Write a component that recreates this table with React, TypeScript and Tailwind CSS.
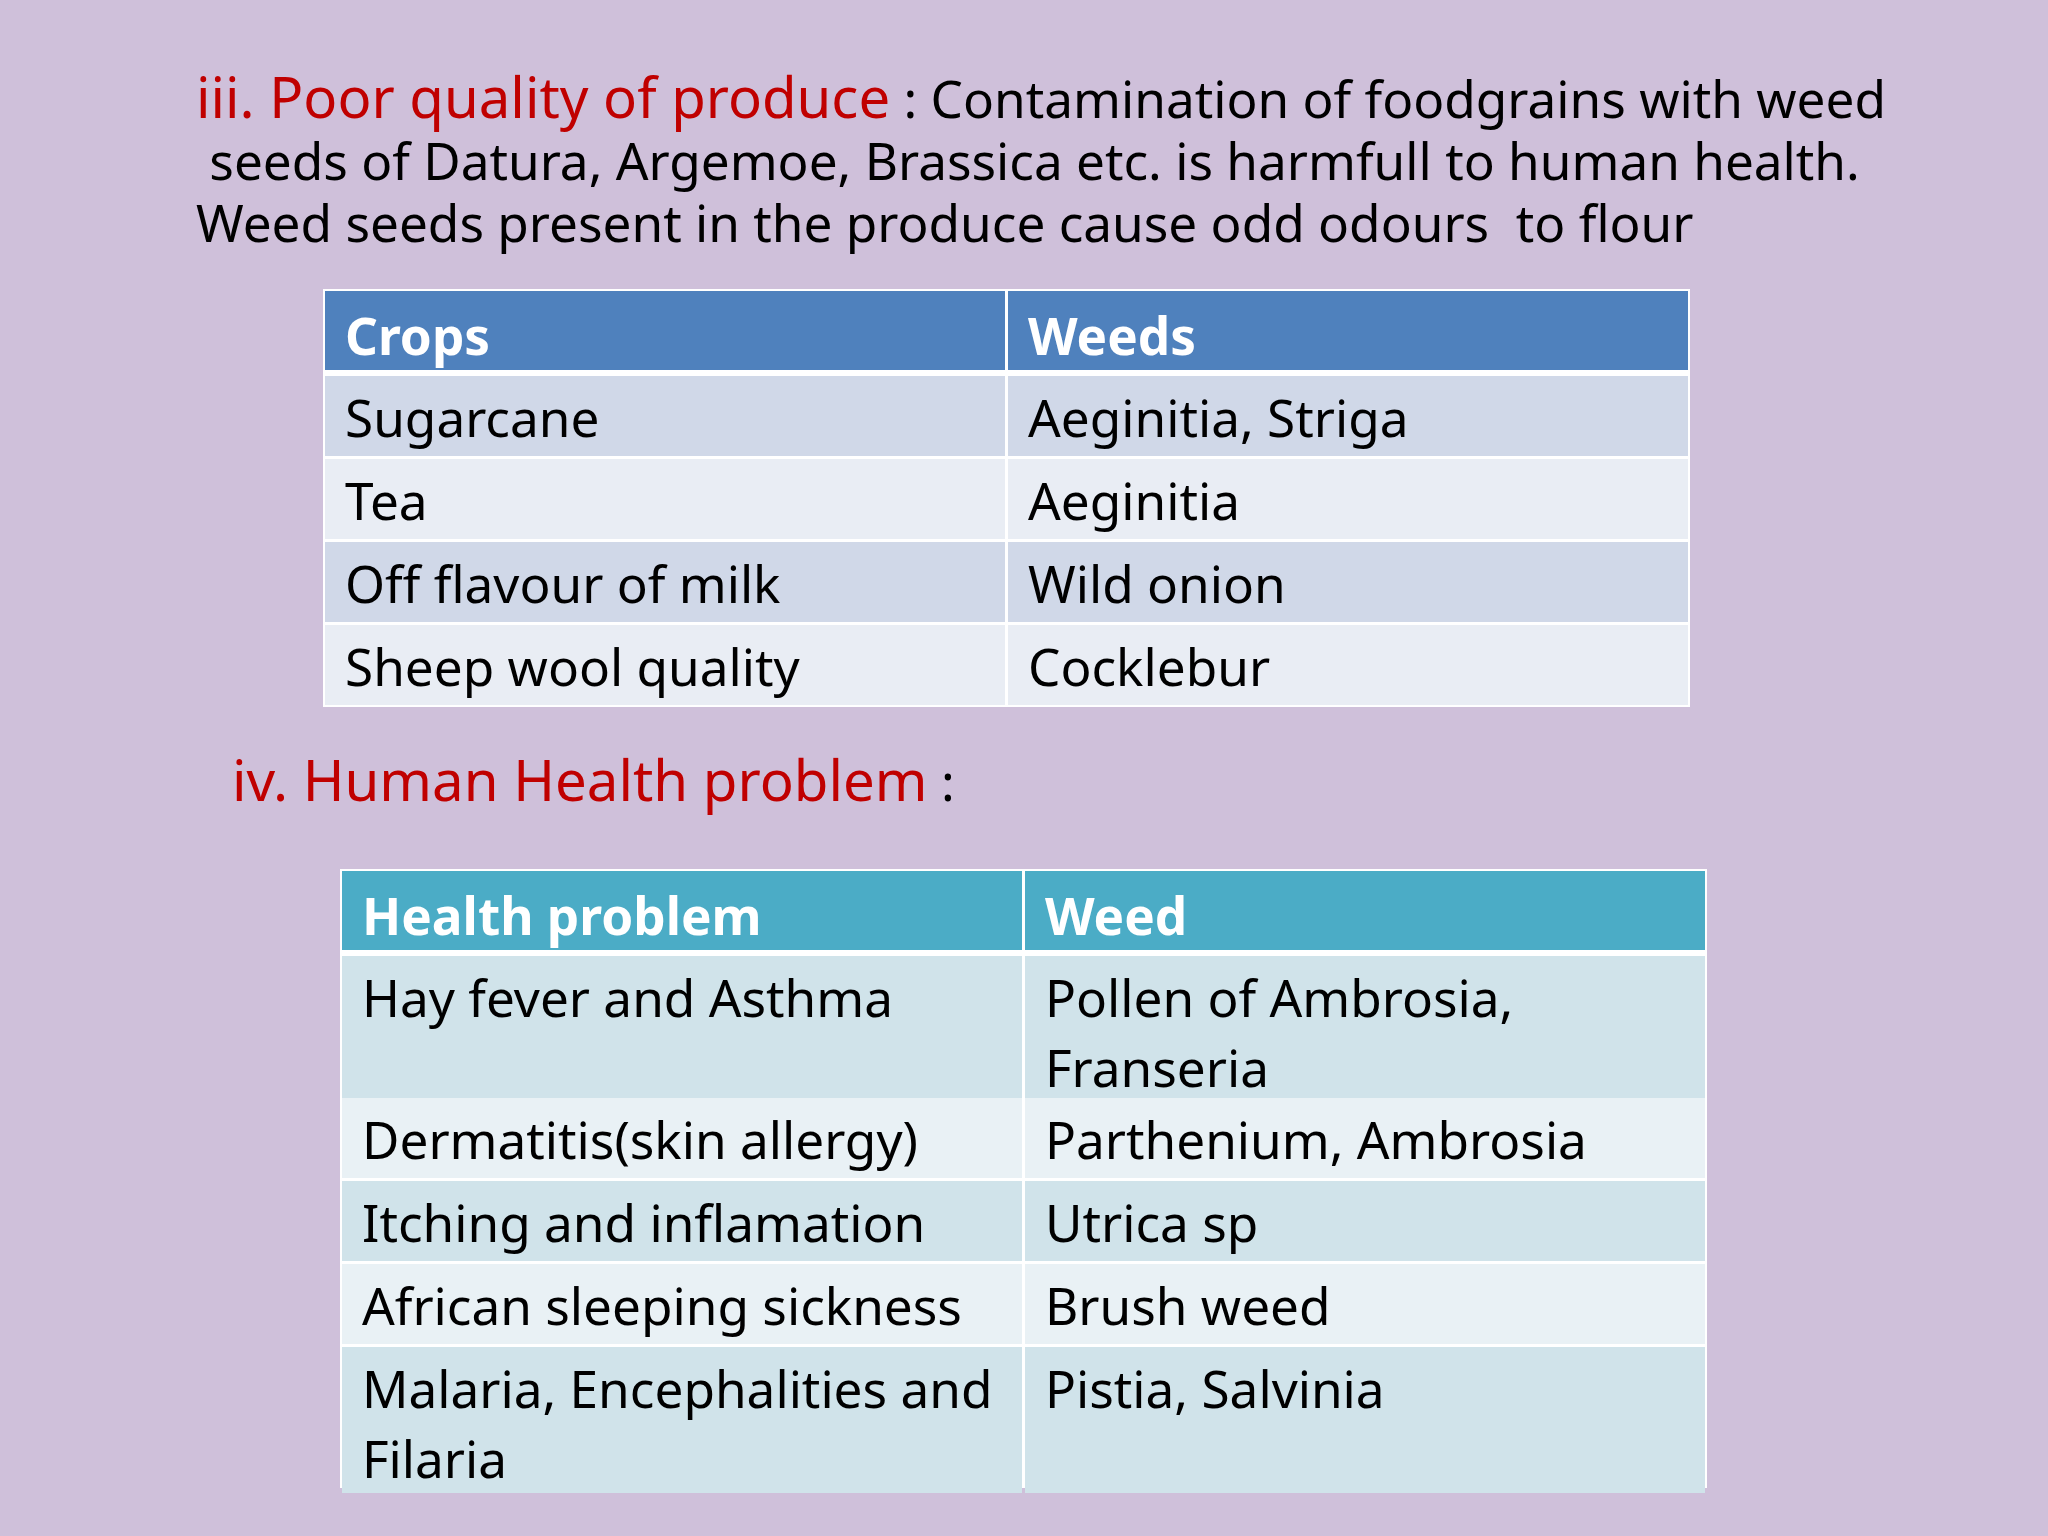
import React from "react";

const font = { fontFamily: '"Noto Sans", "Open Sans", sans-serif' };

type Row = { a: string[]; b: string[]; tall?: boolean };

function Table({
  headA,
  headB,
  rows,
  headBg,
  odd,
  even,
  ml,
}: {
  headA: string;
  headB: string;
  rows: Row[];
  headBg: string;
  odd: string;
  even: string;
  ml: string;
}) {
  return (
    <div className={`${ml} w-[1367px] bg-white p-[2px] flex flex-col`}>
      <div className={`grid grid-cols-2 gap-x-[3px] h-[77px] bg-white`}>
        <div className={`${headBg} pl-[20px] pt-[9px] text-[51.3px] leading-[70px] font-bold text-white`}>{headA}</div>
        <div className={`${headBg} pl-[20px] pt-[9px] text-[51.3px] leading-[70px] font-bold text-white`}>{headB}</div>
      </div>
      <div className="h-[8px]" />
      <div className="flex flex-col gap-y-[3px]">
        {rows.map((r, i) => {
          const bg = i % 2 === 0 ? odd : even;
          return (
            <div key={i} className={`grid grid-cols-2 gap-x-[3px] ${r.tall ? "h-[139px]" : "h-[80px]"}`}>
              <div className={`${bg} pl-[20px] pt-[6px] text-[51.3px] leading-[70px] text-black`}>
                {r.a.map((t, j) => (
                  <div key={j}>{t}</div>
                ))}
              </div>
              <div className={`${bg} pl-[20px] pt-[6px] text-[51.3px] leading-[70px] text-black`}>
                {r.b.map((t, j) => (
                  <div key={j}>{t}</div>
                ))}
              </div>
            </div>
          );
        })}
      </div>
    </div>
  );
}

export default function App() {
  return (
    <div className="w-[2048px] h-[1536px] bg-[#cfc0da] overflow-hidden flex flex-col" style={font}>
      <div className="ml-[196px] mt-[65px] text-[51.3px] leading-[62px] text-black whitespace-pre">
        <div>
          <span className="text-[#c00000] text-[56.3px]">iii. Poor quality of produce</span> : Contamination of foodgrains with weed
        </div>
        <div> seeds of Datura, Argemoe, Brassica etc. is harmfull to human health.</div>
        <div>Weed seeds present in the produce cause odd odours  to flour</div>
      </div>

      <div className="mt-[36px]">
        <Table
          ml="ml-[323px]"
          headA="Crops"
          headB="Weeds"
          headBg="bg-[#4f81bd]"
          odd="bg-[#d0d8e8]"
          even="bg-[#e9edf4]"
          rows={[
            { a: ["Sugarcane"], b: ["Aeginitia, Striga"] },
            { a: ["Tea"], b: ["Aeginitia"] },
            { a: ["Off flavour of milk"], b: ["Wild onion"] },
            { a: ["Sheep wool quality"], b: ["Cocklebur"] },
          ]}
        />
      </div>

      <div className="ml-[232px] mt-[38px] text-[56.4px] leading-[70px] whitespace-pre">
        <span className="text-[#c00000]">iv. Human Health problem</span>
        <span className="text-black text-[51.3px]"> :</span>
      </div>

      <div className="mt-[53px]">
        <Table
          ml="ml-[340px]"
          headA="Health problem"
          headB="Weed"
          headBg="bg-[#4bacc6]"
          odd="bg-[#d0e3ea]"
          even="bg-[#e9f1f5]"
          rows={[
            { a: ["Hay fever and Asthma"], b: ["Pollen of Ambrosia,", "Franseria"], tall: true },
            { a: ["Dermatitis(skin allergy)"], b: ["Parthenium, Ambrosia"] },
            { a: ["Itching and inflamation"], b: ["Utrica sp"] },
            { a: ["African sleeping sickness"], b: ["Brush weed"] },
            { a: ["Malaria, Encephalities and", "Filaria"], b: ["Pistia, Salvinia"], tall: true },
          ]}
        />
      </div>
    </div>
  );
}
